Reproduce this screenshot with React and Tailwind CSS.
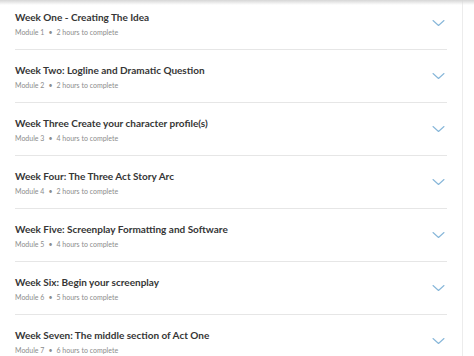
import React from "react";

const rows = [
  ["Week One - Creating The Idea", 1, 2],
  ["Week Two: Logline and Dramatic Question", 2, 2],
  ["Week Three Create your character profile(s)", 3, 4],
  ["Week Four: The Three Act Story Arc", 4, 2],
  ["Week Five: Screenplay Formatting and Software", 5, 4],
  ["Week Six: Begin your screenplay", 6, 5],
  ["Week Seven: The middle section of Act One", 7, 6],
];

function Chevron() {
  return (
    <svg width="13" height="8" viewBox="0 0 13 8" fill="none" className="shrink-0">
      <path d="M1 1.5l5.5 5 5.5-5" stroke="#86b6d9" strokeWidth="1.1" strokeLinecap="round" strokeLinejoin="round" />
    </svg>
  );
}

export default function App() {
  return (
    <div className="relative w-[474px] h-[356px] overflow-hidden bg-white" style={{ fontFamily: "Lato, 'Open Sans', sans-serif" }}>
      <div className="absolute top-0 left-0 right-0 h-[5px] bg-gradient-to-b from-[#d6d6d6] to-transparent z-10" />
      <div className="w-[463px] border-r border-[#ececec] mt-[-3px]">
        {rows.map(([t, m, h]) => (
          <div key={m} className="mx-[15px] h-[53px] border-b border-[#e6e6e6] flex items-center justify-between">
            <div className="flex flex-col pt-[1px]">
              <div className="text-[10px] leading-[14px] font-bold text-[#363636]">{t}</div>
              <div className="text-[7px] leading-[9px] mt-[4px] text-[#8c8c8c] flex items-center gap-[4px]">
                <span>Module {m}</span>
                <span>•</span>
                <span>{h} hours to complete</span>
              </div>
            </div>
            <div className="mr-[2px]">
              <Chevron />
            </div>
          </div>
        ))}
      </div>
    </div>
  );
}
